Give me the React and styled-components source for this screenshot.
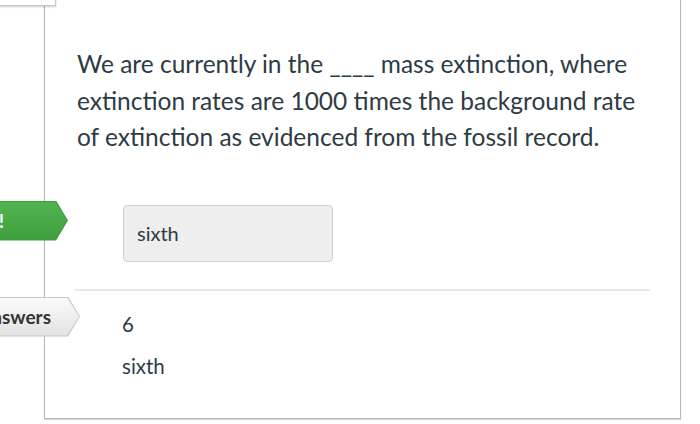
import React from 'react';
import styled, { createGlobalStyle } from 'styled-components';

const GlobalStyle = createGlobalStyle`
    html, body {
        margin: 0;
        padding: 0;
        background: #fff;
        overflow: hidden;
    }
    body {
        font-family: Lato, "Open Sans", sans-serif;
        color: #2d3b45;
    }
`

const Page = styled.div`
    position: relative;
    width: 700px;
    height: 424px;
    overflow: hidden;
`

// bit of the previous card poking in at the top left
const TopStub = styled.div`
    position: absolute;
    left: -10px;
    top: -30px;
    width: 64px;
    height: 34px;
    background: #fff;
    border: 1px solid #c4c4c4;
    box-shadow: 0 1px 2px rgba(0,0,0,0.2);
    z-index: 2;
`

const Card = styled.div`
    position: relative;
    margin: -20px 0 0 44px;
    width: 637px;
    height: 439px;
    box-sizing: border-box;
    border: 1px solid #b8b8b8;
    box-shadow: 0 1px 1px rgba(0,0,0,0.15);
    padding: 65px 30px 0 32px;
    display: flex;
    flex-direction: column;
`

const Question = styled.p`
    margin: 0;
    width: 570px;
    font-size: 24.5px;
    line-height: 36.5px;
`

const AnswerRow = styled.div`
    position: relative;
    padding-left: 46px;
`

const GivenRow = styled(AnswerRow)`
    margin-top: 49px;
`

const ShapeTag = styled.div`
    position: absolute;
    right: calc(100% + ${p => p.gap}px);
    top: ${p => p.top}px;
    width: 200px;
    height: 40px;
    clip-path: polygon(0 0, calc(100% - 12px) 0, 100% 50%, calc(100% - 12px) 100%, 0 100%);
    background: ${p => p.edge};
`

const TagFace = styled.div`
    position: absolute;
    inset: 1px;
    clip-path: polygon(0 0, calc(100% - 12px) 0, 100% 50%, calc(100% - 12px) 100%, 0 100%);
    background: ${p => p.fill};
    color: ${p => p.ink};
    font-size: 19px;
    font-weight: 700;
    line-height: 38px;
    text-align: right;
    white-space: nowrap;
    padding-right: ${p => p.pad}px;
    box-sizing: border-box;
`

const AnswerBox = styled.div`
    width: 210px;
    height: 57px;
    box-sizing: border-box;
    background: #eeeeee;
    border: 1px solid #cfcfcf;
    border-radius: 4px;
    padding-left: 13px;
    font-size: 20px;
    line-height: 55px;
`

const Divider = styled.hr`
    margin: 27px 0 0 -2px;
    width: 575px;
    height: 2px;
    border: none;
    background: #e6e6e6;
`

const AnswerList = styled.div`
    display: flex;
    flex-direction: column;
    gap: 18px;
    padding-top: 21px;
    margin-left: -1px;
`

const AnswerText = styled.div`
    font-size: 20.5px;
    line-height: 24px;
`

export default function App(){
    return (
        <Page>
            <GlobalStyle/>
            <TopStub/>
            <Card>
                <Question>
                    We are currently in the ____ mass extinction, where extinction rates are 1000 times the background rate of extinction as evidenced from the fossil record.
                </Question>

                <GivenRow>
                    <ShapeTag gap={9} top={-4} edge="#3f9a3d">
                        <TagFace fill="linear-gradient(#52b350, #3e9f3c)" ink="#fff" pad={63}>Correct!</TagFace>
                    </ShapeTag>
                    <AnswerBox>sixth</AnswerBox>
                </GivenRow>

                <Divider/>

                <AnswerRow>
                    <ShapeTag gap={-3} top={6} edge="#c8c8c8">
                        <TagFace fill="linear-gradient(#fbfbfb, #e2e2e2)" ink="#333" pad={28}>Correct Answers</TagFace>
                    </ShapeTag>
                    <AnswerList>
                        <AnswerText>6</AnswerText>
                        <AnswerText>sixth</AnswerText>
                    </AnswerList>
                </AnswerRow>
            </Card>
        </Page>
    )
}
